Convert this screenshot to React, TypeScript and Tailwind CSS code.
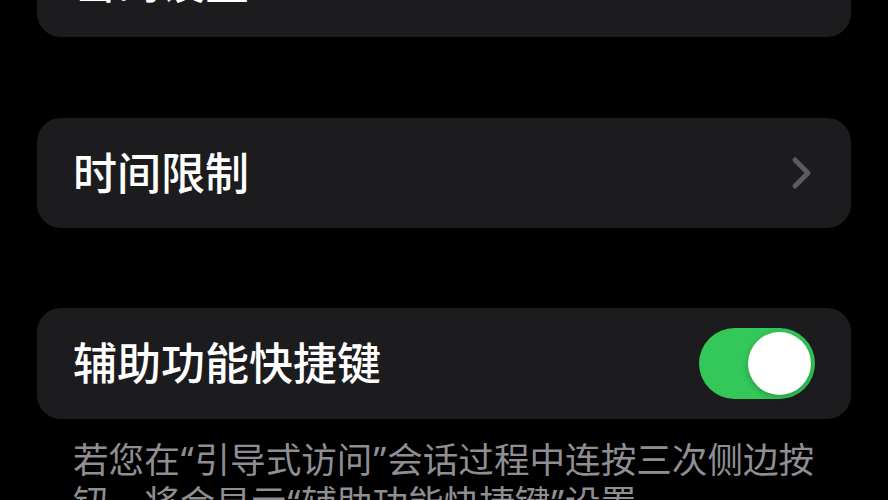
const Chevron = () => (
  <svg width="22" height="34" viewBox="0 0 22 34" fill="none">
    <path
      d="M4 4 L17 17 L4 30"
      stroke="#5b5b60"
      strokeWidth="5"
      strokeLinecap="round"
      strokeLinejoin="round"
    />
  </svg>
);

const Toggle = () => (
  <div className="w-[116px] h-[71px] rounded-full bg-[#34c759] flex items-center justify-end pr-[4px]">
    <div className="w-[63px] h-[63px] rounded-full bg-white shadow-[0_2px_6px_rgba(0,0,0,0.25)]" />
  </div>
);

const Q = ({ children }: { children: string }) => (
  <span className="px-[1px]" style={{ fontFamily: '"Noto Sans", sans-serif' }}>
    {children}
  </span>
);

export default function App() {
  return (
    <div
      className="w-[888px] h-[500px] bg-black overflow-hidden flex flex-col px-[37px] text-white"
      style={{ fontFamily: '"Noto Sans CJK SC", "Noto Sans", sans-serif' }}
    >
      <div className="-mt-[73px] h-[110px] shrink-0 rounded-[24px] bg-[#1c1c1e] flex items-center px-[36px]">
        <span className="text-[44px] font-medium leading-none -mt-[5px]">密码设置</span>
      </div>

      <div className="mt-[81px] h-[110px] shrink-0 rounded-[24px] bg-[#1c1c1e] flex items-center justify-between pl-[36px] pr-[38px]">
        <span className="text-[44px] font-medium leading-none -mt-[5px]">时间限制</span>
        <Chevron />
      </div>

      <div className="mt-[80px] h-[111px] shrink-0 rounded-[24px] bg-[#1c1c1e] flex items-center justify-between pl-[36px] pr-[36px]">
        <span className="text-[44px] font-medium leading-none -mt-[5px]">辅助功能快捷键</span>
        <Toggle />
      </div>

      <p className="mt-[18px] pl-[36px] text-[35.6px] leading-[42px] text-[#8e8e93] whitespace-nowrap">
        若您在<Q>“</Q>引导式访问<Q>”</Q>会话过程中连按三次侧边按
        <br />
        钮，将会显示<Q>“</Q>辅助功能快捷键<Q>”</Q>设置。
      </p>
    </div>
  );
}
